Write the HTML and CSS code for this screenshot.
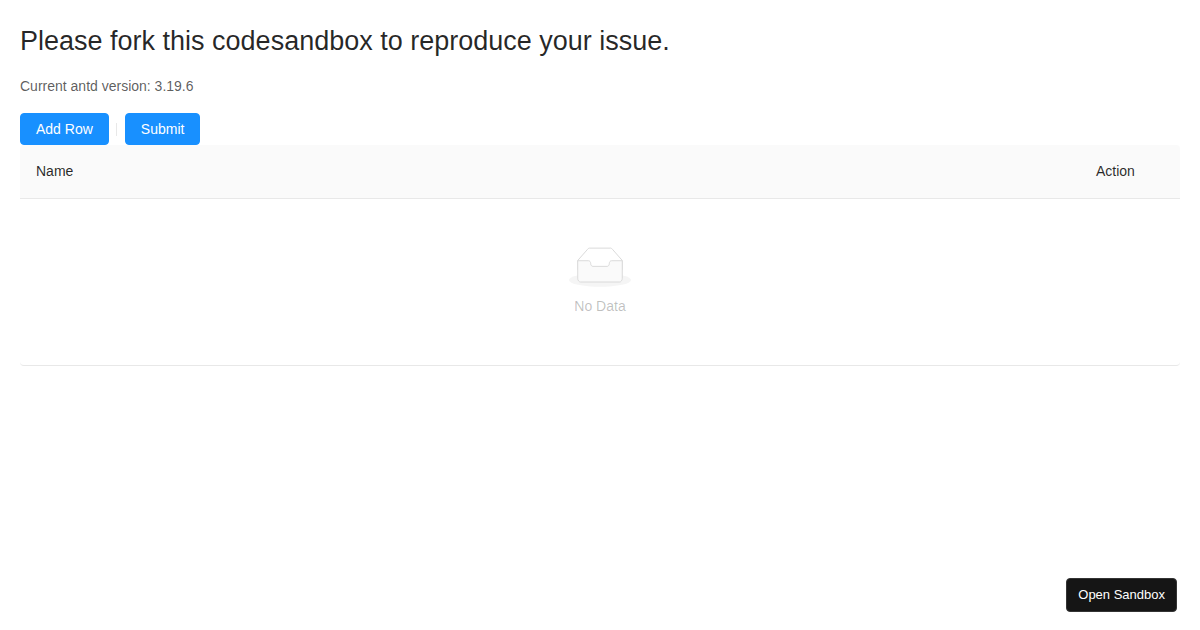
FILE: index.html
```html
<!DOCTYPE html>
<html lang="en">
<head>
    <meta charset="UTF-8">
    <meta name="viewport" content="width=device-width, initial-scale=1.0">
    <title>Editable Table</title>
    <link rel="stylesheet" href="styles.css">
</head>
<body>
    <main class="container">
        <h1>Please fork this codesandbox to reproduce your issue.</h1>
        <p class="version">Current antd version: 3.19.6</p>

        <div class="toolbar">
            <button type="button" class="btn">Add Row</button>
            <span class="divider"></span>
            <button type="submit" class="btn">Submit</button>
        </div>

        <table class="table">
            <thead>
                <tr>
                    <th scope="col">Name</th>
                    <th scope="col" class="action">Action</th>
                </tr>
            </thead>
        </table>

        <div class="placeholder">
            <svg class="empty-icon" width="62" height="40" viewBox="0 0 64 41" aria-hidden="true">
                <g transform="translate(0 1)" fill="none" fill-rule="evenodd">
                    <ellipse fill="#F5F5F5" cx="32" cy="33" rx="32" ry="7"/>
                    <g fill-rule="nonzero" stroke="#D9D9D9">
                        <path d="M55 12.76L44.854 1.258C44.367.474 43.656 0 42.907 0H21.093c-.749 0-1.46.474-1.947 1.257L9 12.761V22h46v-9.24z"/>
                        <path d="M41.613 15.931c0-1.605.994-2.93 2.227-2.931H55v18.137C55 33.26 53.68 35 52.05 35h-40.1C10.32 35 9 33.259 9 31.137V13h11.16c1.233 0 2.227 1.323 2.227 2.928v.022c0 1.605 1.005 2.901 2.237 2.901h14.752c1.232 0 2.237-1.308 2.237-2.913v-.007z" fill="#FAFAFA"/>
                    </g>
                </g>
            </svg>
            <p>No Data</p>
        </div>
    </main>

    <button type="button" class="open-sandbox">Open Sandbox</button>
</body>
</html>
```

FILE: styles.css
```css
* {
    box-sizing: border-box;
}
body {
    margin: 0;
    background-color: #fff;
    color: rgba(0, 0, 0, 0.65);
    font-family: "Liberation Sans", Arial, sans-serif;
    font-size: 14px;
    line-height: 21px;
}
.container {
    padding: 20px;
}
h1 {
    margin: 0 0 14px;
    color: rgba(0, 0, 0, 0.85);
    font-size: 27px;
    font-weight: 400;
    line-height: 42px;
}
.version {
    margin: 0 0 16px;
}
.toolbar {
    display: flex;
    align-items: center;
}
button {
    font-family: inherit;
    color: #fff;
    cursor: pointer;
}
.btn {
    height: 32px;
    padding: 0 15px;
    border: 1px solid #1890ff;
    border-radius: 4px;
    background-color: #1890ff;
    font-size: 14px;
}
.divider {
    width: 1px;
    height: 13px;
    margin: 0 8px 0 7px;
    background-color: #e8e8e8;
}
.table {
    width: 100%;
    border-collapse: separate;
    border-spacing: 0;
}
.table th {
    padding: 16px;
    border-bottom: 1px solid #e8e8e8;
    background-color: #fafafa;
    color: rgba(0, 0, 0, 0.85);
    font-weight: 400;
    text-align: left;
}
.table th:first-child {
    border-top-left-radius: 4px;
}
.table th:last-child {
    border-top-right-radius: 4px;
}
.table .action {
    width: 100px;
}
.placeholder {
    padding: 48px 16px;
    border-bottom: 1px solid #e8e8e8;
    border-radius: 0 0 4px 4px;
    color: rgba(0, 0, 0, 0.25);
    text-align: center;
}
.empty-icon {
    display: block;
    margin: 0 auto 9px;
}
.placeholder p {
    margin: 0;
}
.open-sandbox {
    position: fixed;
    right: 23px;
    bottom: 18px;
    height: 34px;
    padding: 0 11px 2px;
    border: 1px solid #343434;
    border-radius: 4px;
    background-color: #151515;
    font-size: 13px;
}
```
